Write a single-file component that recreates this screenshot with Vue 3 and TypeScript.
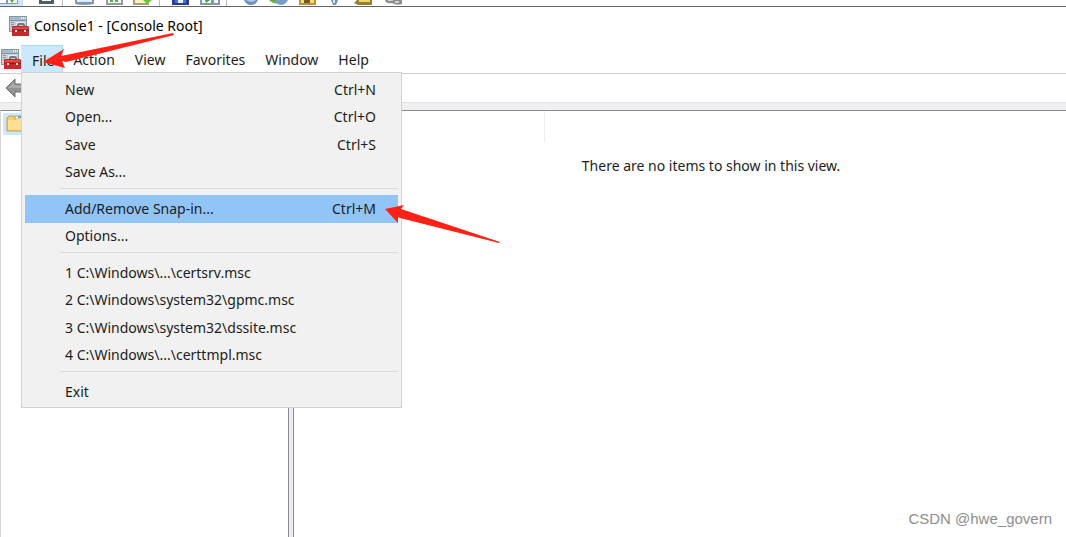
<script setup lang="ts">
interface MenuEntry {
  label: string
  shortcut?: string
  active?: boolean
}

const menus: string[] = ['File', 'Action', 'View', 'Favorites', 'Window', 'Help']

const groups: MenuEntry[][] = [
  [
    { label: 'New', shortcut: 'Ctrl+N' },
    { label: 'Open...', shortcut: 'Ctrl+O' },
    { label: 'Save', shortcut: 'Ctrl+S' },
    { label: 'Save As...' },
  ],
  [
    { label: 'Add/Remove Snap-in...', shortcut: 'Ctrl+M', active: true },
    { label: 'Options...' },
  ],
  [
    { label: '1 C:\\Windows\\...\\certsrv.msc' },
    { label: '2 C:\\Windows\\system32\\gpmc.msc' },
    { label: '3 C:\\Windows\\system32\\dssite.msc' },
    { label: '4 C:\\Windows\\...\\certtmpl.msc' },
  ],
  [{ label: 'Exit' }],
]
</script>

<template>
  <div class="screen">
    <div class="outer-toolbar">
      <svg width="430" height="6" viewBox="0 0 430 6" aria-hidden="true">
        <path d="M0 0H23V6H0Z" fill="#cce5fa" />
        <path d="M0 0H18V4H0Z" fill="#8798a8" />
        <path d="M0 0H6V3H0ZM8 0H17V3H8Z" fill="#fff" />
        <path d="M10 0H14L12 3Z" fill="#3fae3a" />
        <path d="M39 0H54V4H39Z" fill="#555b62" />
        <path d="M42 0H51V1H42Z" fill="#fff" />
        <path d="M62 0H63V6H62ZM159 0H160V6H159ZM226 0H227V6H226Z" fill="#bcbcbc" />
        <path d="M75 0H94V4Q84 6 75 4Z" fill="#8a97a5" />
        <path d="M77 0H92V2H77Z" fill="#e2edf8" />
        <path d="M80 2H90V3H80Z" fill="#4f9cdb" />
        <path d="M106 0H123V5H106Z" fill="#949ba2" />
        <path d="M108 0H121V3H108Z" fill="#f5f8f5" />
        <path d="M110 0H113V2H110ZM115 0H118V2H115Z" fill="#55ad4c" />
        <path d="M133 0H149V5H133Z" fill="#a69f83" />
        <path d="M135 0H147V3H135Z" fill="#fff1bd" />
        <path d="M143 0H152L147 4Z" fill="#6fc637" />
        <path d="M172 0H189V5H172Z" fill="#283c91" />
        <path d="M175 0H186V3H175Z" fill="#4a72d4" />
        <path d="M178 0H183V3H178Z" fill="#e9efff" />
        <path d="M200 0H220V5H200Z" fill="#8996a3" />
        <path d="M202 0H211V3H202ZM214 0H218V3H214Z" fill="#f5faff" />
        <path d="M205 0H210L206 3Z" fill="#35ad31" />
        <path d="M244 0H258Q256 5 251 5Q246 5 244 0Z" fill="#6e91b8" />
        <path d="M246 0H256Q252 4 246 0Z" fill="#a9cdec" />
        <path d="M269 0H281V3Q274 5 269 0Z" fill="#67a94c" />
        <path d="M275 0H288Q286 5 280 5Q276 4 275 0Z" fill="#76a0c5" />
        <path d="M299 0H316V5H299Z" fill="#ba923d" />
        <path d="M301 0H314V3H301Z" fill="#ffda73" />
        <path d="M304 0H310V3H304Z" fill="#74571e" />
        <path d="M331 0H338L336 5H333Z" fill="#7394af" />
        <path d="M333 0H335V3H333Z" fill="#d4e8f7" />
        <path d="M354 3L357 0H372V5H358Z" fill="#938133" />
        <path d="M359 0H370V2H359Z" fill="#f1d769" />
        <path d="M385 0H402V4Q397 6 392 3Q386 4 385 0Z" fill="#8c8c8c" />
        <path d="M388 0H393V1H388ZM395 1H399V3H395Z" fill="#d2d2d2" />
      </svg>
    </div>

    <header class="title-bar">
      <svg class="app-icon" viewBox="0 0 20 20" aria-hidden="true">
        <path d="M0 0H18V16H0Z" fill="#8796a3" />
        <path d="M1 1H17V4H1Z" fill="#a9bac8" />
        <path d="M12 1H13V3H12ZM14 1H15V3H14ZM16 1H17V3H16Z" fill="#e9eff4" />
        <path d="M1 5H17V15H1Z" fill="#c6d0d8" />
        <path d="M2 6H5V7H2ZM2 8H5V9H2ZM2 10H4V11H2Z" fill="#8d9ba7" />
        <path d="M7 6H16V9H7Z" fill="#e6ebee" />
        <path d="M8 11V9Q8 7 10 7H14Q16 7 16 9V11H14V9H10V11Z" fill="#74797e" />
        <path d="M3 11L4 10H19L20 11V20H3Z" fill="#c42a2b" />
        <path d="M4 11H19V13H4Z" fill="#dc4a47" />
        <path d="M3 14H20V15H3Z" fill="#8e1f22" />
        <path d="M6 14H8V16H6ZM15 14H17V16H15Z" fill="#f0dddd" />
      </svg>
      <h1>Console1 - [Console Root]</h1>
    </header>

    <nav class="menu-bar" aria-label="Main menu">
      <svg class="app-icon" viewBox="0 0 20 20" aria-hidden="true">
        <path d="M0 0H18V16H0Z" fill="#8796a3" />
        <path d="M1 1H17V4H1Z" fill="#a9bac8" />
        <path d="M12 1H13V3H12ZM14 1H15V3H14ZM16 1H17V3H16Z" fill="#e9eff4" />
        <path d="M1 5H17V15H1Z" fill="#c6d0d8" />
        <path d="M2 6H5V7H2ZM2 8H5V9H2ZM2 10H4V11H2Z" fill="#8d9ba7" />
        <path d="M7 6H16V9H7Z" fill="#e6ebee" />
        <path d="M8 11V9Q8 7 10 7H14Q16 7 16 9V11H14V9H10V11Z" fill="#74797e" />
        <path d="M3 11L4 10H19L20 11V20H3Z" fill="#c42a2b" />
        <path d="M4 11H19V13H4Z" fill="#dc4a47" />
        <path d="M3 14H20V15H3Z" fill="#8e1f22" />
        <path d="M6 14H8V16H6ZM15 14H17V16H15Z" fill="#f0dddd" />
      </svg>
      <div v-for="(name, index) in menus" :key="name" class="menu-holder">
        <button type="button" class="menu-name" :class="{ open: index === 0 }">{{ name }}</button>
        <div v-if="index === 0" class="dropdown" role="menu">
          <div v-for="(group, g) in groups" :key="g" class="group" :class="`rows-${group.length}`">
            <button
              v-for="entry in group"
              :key="entry.label"
              type="button"
              role="menuitem"
              class="entry"
              :class="{ active: entry.active }"
            >
              <span>{{ entry.label }}</span>
              <span v-if="entry.shortcut">{{ entry.shortcut }}</span>
            </button>
          </div>
        </div>
      </div>
    </nav>

    <div class="toolbar">
      <button type="button" class="back" aria-label="Back">
        <svg width="22" height="20" viewBox="0 0 22 20" aria-hidden="true">
          <path d="M1 10L10 1V6H21V14H10V19Z" fill="#929292" stroke="#707070" />
          <path d="M3 10L9 4V7H20V10Z" fill="#acacac" />
        </svg>
      </button>
    </div>

    <main class="panes">
      <aside class="tree">
        <button type="button" class="tree-root" aria-label="Console Root">
          <svg width="20" height="18" viewBox="0 0 20 18" aria-hidden="true">
            <path d="M1 16V3L3 1H8L10 3H19V16Z" fill="#f2cb70" stroke="#c99e47" />
            <path d="M9 1H16V4H9Z" fill="#fff" stroke="#c99e47" />
            <path d="M12 1H15V3H12Z" fill="#57a8dc" />
            <path d="M2 5H9L11 4H19V15H2Z" fill="#ffdf91" />
          </svg>
        </button>
      </aside>
      <div class="splitter"></div>
      <section class="content">
        <div class="column-head"></div>
        <p class="empty">There are no items to show in this view.</p>
        <p class="credit">CSDN @hwe_govern</p>
      </section>
    </main>

    <svg class="pointers" width="510" height="250" viewBox="0 0 510 250" aria-hidden="true">
      <path d="M43 62L64 49L61 56L173 33L174 35L66 62L62 61L65 68Z" fill="#ff2115" />
      <path d="M385 209L404 205L401 209L500 242L499 243L400 218L398 217L398 223Z" fill="#ff2115" />
    </svg>
  </div>
</template>

<style>
body {
  margin: 0;
}
</style>

<style scoped>
.screen {
  position: relative;
  display: flex;
  flex-direction: column;
  min-height: 100vh;
  overflow: hidden;
  background: #fff;
  color: #1c1c1c;
  font: 14px/20px "Noto Sans", "Open Sans", sans-serif;
}

button {
  margin: 0;
  padding: 0;
  border: 0;
  background: transparent;
  color: inherit;
  font: inherit;
}

svg {
  display: block;
}

h1,
p {
  margin: 0;
  font: inherit;
}

.outer-toolbar {
  border-bottom: 1px solid #666;
}

.title-bar {
  display: flex;
  align-items: center;
  gap: 5px;
  height: 38px;
  padding-left: 9px;
  color: #000;
}

.app-icon {
  flex: none;
  width: 20px;
  height: 20px;
}

.menu-bar {
  display: flex;
  height: 28px;
  border-bottom: 1px solid #cfcfcf;
}

.menu-bar .app-icon {
  margin: 4px 0 0 1px;
}

.menu-holder {
  position: relative;
}

.menu-name {
  height: 28px;
  padding: 2px 10px 0;
}

.menu-name.open {
  padding: 2px 8px 0 11px;
  border: 1px solid #a9d7f8;
  border-width: 1px 1px 0 0;
  background: #cce8ff;
}

.dropdown {
  position: absolute;
  top: 27px;
  left: 0;
  z-index: 2;
  box-sizing: border-box;
  width: 381px;
  padding: 3px 3px 1px;
  border: 1px solid #d2d2d2;
  background: #f1f1f1;
}

.group {
  position: relative;
  display: grid;
  grid-auto-rows: 1fr;
}

.group + .group {
  margin-top: 9px;
}

.group + .group::before {
  position: absolute;
  top: -7px;
  right: 0;
  left: 35px;
  height: 1px;
  background: #dcdcdc;
  content: "";
}

.rows-1 {
  min-height: 28px;
}

.rows-2 {
  min-height: 55px;
}

.rows-4 {
  min-height: 110px;
}

.entry {
  display: flex;
  align-items: center;
  justify-content: space-between;
  padding: 0 22px 0 40px;
  text-align: left;
}

.entry.active {
  background: #91c5f8;
}

.toolbar {
  display: flex;
  align-items: center;
  height: 28px;
  border-bottom: 1px solid #e2e2e2;
}

.back {
  margin-left: 5px;
}

.panes {
  display: flex;
  flex: 1;
  border-top: 7px solid #f0f0f0;
}

.tree {
  box-sizing: border-box;
  width: 27%;
  border-top: 1px solid #858a93;
  border-left: 1px solid #d5d5d5;
}

.tree-root {
  width: 28px;
  height: 22px;
  margin: 2px 0 0 2px;
  padding-left: 3px;
  background: #cce8ff;
}

.splitter {
  width: 4px;
  border-right: 1px solid #858a93;
  border-left: 1px solid #858a93;
  background: #ededed;
}

.content {
  display: flex;
  flex: 1;
  flex-direction: column;
  border-top: 1px solid #858a93;
}

.column-head {
  width: 250px;
  height: 31px;
  border-right: 1px solid #eee;
}

.empty {
  padding: 14px 0 0 288px;
}

.credit {
  margin-top: auto;
  padding: 0 14px 8px 0;
  color: #8d8d8d;
  font: 15px/20px "Liberation Sans", sans-serif;
  text-align: right;
}

.pointers {
  position: absolute;
  top: 0;
  left: 0;
  z-index: 3;
  pointer-events: none;
}
</style>
